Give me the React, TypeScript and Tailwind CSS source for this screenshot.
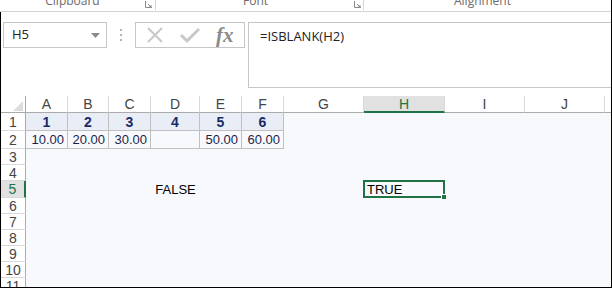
const COLS = ["A", "B", "C", "D", "E", "F", "G", "H", "I", "J", ""];
const ROW_H = ["h-[18px]", "h-[18px]", "h-[16px]", "h-[16px]", "h-[17px]", "h-[16px]", "h-[16px]", "h-[16px]", "h-[16px]", "h-[16px]", "h-[16px]"];

const row1 = ["1", "2", "3", "4", "5", "6"];
const row2 = ["10.00", "20.00", "30.00", "", "50.00", "60.00"];

const cellFont = "font-['Liberation_Sans',Arial,sans-serif] text-[13px]";
const hdrFont = "font-['Liberation_Sans',Arial,sans-serif] text-[14px]";

function Launcher() {
  return (
    <svg width="7" height="7" viewBox="0 0 7 7" className="mt-[1px]">
      <path d="M0.5 0v6.5H7" fill="none" stroke="#8a8a8a" strokeWidth="1" />
      <path d="M3 3l3 3M4 6h2V4" fill="none" stroke="#8a8a8a" strokeWidth="1" />
    </svg>
  );
}

function Ribbon() {
  return (
    <div className="flex h-[12px] overflow-hidden border-b border-[#d5d5d5] bg-white text-[12px] leading-[12px] text-[#6a6a6a] font-['Open_Sans',sans-serif]">
      <div className="flex w-[157px] items-start">
        <div className="w-[145px] text-center -mt-[5px]">Clipboard</div>
        <Launcher />
        <div className="ml-[3px] h-[10px] w-px bg-[#d5d5d5]" />
      </div>
      <div className="flex w-[207px] items-start">
        <div className="w-[197px] text-center -mt-[5px]">Font</div>
        <Launcher />
        <div className="ml-[2px] h-[10px] w-px bg-[#d5d5d5]" />
      </div>
      <div className="flex-1 text-center -mt-[5px] pr-[10px]">Alignment</div>
    </div>
  );
}

function FormulaRow() {
  return (
    <div className="flex h-[85px] bg-white pt-[10px] font-['Open_Sans',sans-serif] text-[12px] text-[#222]">
      <div className="ml-[2px] flex h-[26px] w-[104px] items-center justify-between border border-[#c6c6c6] pl-[8px] pr-[6px] text-[13px]">
        <span>H5</span>
        <svg width="9" height="5" viewBox="0 0 9 5">
          <path d="M0 0h9L4.5 5z" fill="#8a8a8a" />
        </svg>
      </div>
      <div className="ml-[13px] mr-[13px] flex h-[26px] flex-col items-center justify-center gap-[3px]">
        <div className="h-[2px] w-[2px] bg-[#b5b5b5]" />
        <div className="h-[2px] w-[2px] bg-[#b5b5b5]" />
        <div className="h-[2px] w-[2px] bg-[#b5b5b5]" />
      </div>
      <div className="flex h-[26px] w-[110px] items-center border border-[#c6c6c6] pl-[10px]">
        <svg width="18" height="18" viewBox="0 0 18 18">
          <path d="M2 2l14 14M16 2L2 16" stroke="#c8c8c8" strokeWidth="2" fill="none" />
        </svg>
        <svg width="20" height="18" viewBox="0 0 20 18" className="ml-[16px]">
          <path d="M1 9l6 6L19 3" stroke="#c8c8c8" strokeWidth="3" fill="none" />
        </svg>
        <span className="ml-[16px] font-['Liberation_Serif',serif] text-[21px] italic font-bold text-[#8a8a8a] leading-none">
          fx
        </span>
      </div>
      <div className="ml-[3px] h-[66px] flex-1 border-y border-l border-[#c6c6c6] pl-[11px] pt-[4px] text-[13px]">
        =ISBLANK(H2)
      </div>
    </div>
  );
}

function Grid() {
  return (
    <div className="mt-[-1px] grid grid-cols-[25px_42px_41px_42px_49px_42px_42px_80px_81px_80px_80px_1fr] bg-[#f8f9fd]">
      {/* column headers */}
      <div className="relative h-[17px] border-r border-b border-[#ababab] bg-white">
        <svg width="10" height="10" viewBox="0 0 10 10" className="absolute right-[2px] bottom-[1px]">
          <path d="M10 0V10H0z" fill="#dcdcdc" />
        </svg>
      </div>
      {COLS.map((c) => (
        <div
          key={c || "x"}
          className={`flex h-[17px] items-center justify-center border-b leading-none ${hdrFont} ${
            c === "H"
              ? "border-b-2 border-b-[#217346] bg-[#e1e1e1] text-[#217346]"
              : "border-[#ababab] bg-white text-[#444]"
          } ${c ? "border-r border-r-[#d9d9d9]" : ""}`}
        >
          {c}
        </div>
      ))}

      {ROW_H.map((h, r) => {
        const rowNum = r + 1;
        return [
          <div
            key={`h${rowNum}`}
            className={`${h} flex items-center justify-center border-b border-[#d9d9d9] leading-none ${hdrFont} ${
              rowNum === 5
                ? "border-r-2 border-r-[#217346] bg-[#e1e1e1] text-[#217346]"
                : "border-r border-r-[#ababab] bg-white text-[#444]"
            }`}
          >
            {rowNum}
          </div>,
          ...COLS.map((c, ci) => {
            let content: React.ReactNode = null;
            let cls = `${h} ${cellFont} leading-none`;
            if (rowNum === 1 && ci < 6) {
              cls += " flex items-center justify-center border-r border-b border-[#c0c0c0] bg-[#e9eef6] font-bold text-[14px] text-[#1c2a66]";
              content = row1[ci];
            } else if (rowNum === 2 && ci < 6) {
              cls += " flex items-center justify-end pr-[3px] border-r border-b border-[#c0c0c0] text-[#1a1f4a]";
              content = row2[ci];
            } else if (rowNum === 5 && c === "D") {
              cls += " flex items-center justify-center text-black";
              content = "FALSE";
            } else if (rowNum === 5 && c === "H") {
              cls += " relative -ml-px -mt-px h-[18px] flex items-center border-2 border-[#217346] pl-[2px] text-black";
              content = (
                <>
                  TRUE
                  <span className="absolute -right-[4px] -bottom-[4px] h-[6px] w-[6px] border border-white bg-[#217346]" />
                </>
              );
            }
            return (
              <div key={`${rowNum}${c || "x"}`} className={cls}>
                {content}
              </div>
            );
          }),
        ];
      })}
    </div>
  );
}

export default function App() {
  return (
    <div className="h-[288px] w-[612px] overflow-hidden border-r border-b border-black bg-white">
      <Ribbon />
      <div className="h-[276px] overflow-hidden border-l border-black">
        <FormulaRow />
        <Grid />
      </div>
    </div>
  );
}
